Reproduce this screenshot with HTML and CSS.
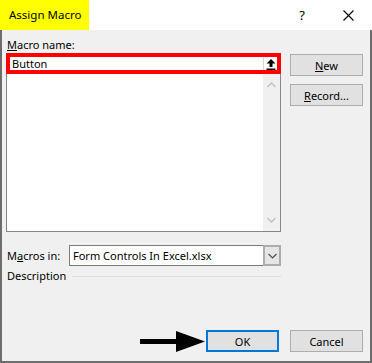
FILE: index.html
```html
<!DOCTYPE html>
<html lang="en">
<head>
  <meta charset="UTF-8" />
  <title>Assign Macro</title>
  <link rel="stylesheet" href="styles.css">
</head>
<body>
  <div class="dialog">
    <div class="titlebar">
      <span class="title">Assign Macro</span>
      <span class="help">?</span>
      <span class="close">
        <svg width="11" height="11" viewBox="0 0 11 11"><path d="M0.5 0.5 L10.5 10.5 M10.5 0.5 L0.5 10.5" stroke="#000" stroke-width="1.1" fill="none"/></svg>
      </span>
    </div>

    <div class="content">
      <div class="main">
        <div class="left">
          <div class="label"><u>M</u>acro name:</div>
          <div class="name-box">
            <span class="name-text">Button</span>
            <span class="collapse-btn">
              <svg width="10" height="12" viewBox="0 0 10 12"><path d="M5 1 L9.5 5.5 L6.5 5.5 L6.5 9 L3.5 9 L3.5 5.5 L0.5 5.5 Z" fill="#000"/><rect x="0.5" y="10.5" width="9" height="1.5" fill="#000"/></svg>
            </span>
          </div>
          <div class="macro-list">
            <div class="list-items"></div>
            <div class="scrollbar">
              <svg width="9" height="6" viewBox="0 0 9 6"><path d="M0.5 5 L4.5 1 L8.5 5" stroke="#c2c2c2" stroke-width="1.5" fill="none"/></svg>
              <svg width="9" height="6" viewBox="0 0 9 6"><path d="M0.5 1 L4.5 5 L8.5 1" stroke="#c2c2c2" stroke-width="1.5" fill="none"/></svg>
            </div>
          </div>
          <div class="macros-in">
            <span class="label">M<u>a</u>cros in:</span>
            <div class="combo">
              <span class="combo-text">Form Controls In Excel.xlsx</span>
              <span class="combo-btn">
                <svg width="9" height="6" viewBox="0 0 9 6"><path d="M0.5 1 L4.5 5 L8.5 1" stroke="#505050" stroke-width="1.2" fill="none"/></svg>
              </span>
            </div>
          </div>
          <div class="description">
            <span>Description</span>
            <span class="rule"></span>
          </div>
        </div>

        <div class="right">
          <button class="btn"><u>N</u>ew</button>
          <button class="btn"><u>R</u>ecord...</button>
        </div>
      </div>

      <div class="footer">
        <svg class="pointer" width="66" height="26" viewBox="0 0 66 26">
          <rect x="0" y="11" width="38" height="5" fill="#000"/>
          <path d="M36 3 L65 13.5 L36 24 Z" fill="#000"/>
        </svg>
        <button class="btn ok">OK</button>
        <button class="btn">Cancel</button>
      </div>
    </div>
  </div>
</body>
</html>
```

FILE: styles.css
```css
body {
  margin: 0; padding: 0;
  font-family: "Noto Sans", "Liberation Sans", sans-serif; font-size: 11px; color: #000;
}
.dialog {
  width: 372px; height: 363px; display: flex; flex-direction: column;
  background: #f0f0f0;
}
.titlebar {
  height: 30px; background: #fff; display: flex; align-items: center;
  font-size: 11.5px;
}
.title {
  background: #ffff00; height: 30px; line-height: 30px; padding-left: 9px;
  width: 89px; box-sizing: border-box; white-space: nowrap;
}
.help { margin-left: auto; margin-right: 38px; font-size: 13px; }
.close { margin-right: 18px; display: flex; }
.content {
  flex: 1; display: flex; flex-direction: column;
  border: 2px solid #6d6d6d; border-top: none;
  padding: 7px 7px 7px 4px;
}
.main { display: flex; gap: 9px; }
.left { width: 275px; display: flex; flex-direction: column; }
.label { line-height: 16px; padding-left: 1px; }
.name-box {
  height: 21px; box-sizing: border-box; border: 4px solid #ff0000; background: #fff;
  display: flex; align-items: center; justify-content: space-between;
}
.name-text { padding-left: 2px; }
.collapse-btn {
  width: 13px; height: 13px; border-left: 1px solid #d6d6d6;
  display: flex; align-items: center; justify-content: center;
}
.macro-list {
  height: 158px; box-sizing: border-box; border: 1px solid #828790; border-top: none;
  background: #fff; display: flex;
}
.list-items { flex: 1; }
.scrollbar {
  width: 17px; background: #f0f0f0; display: flex; flex-direction: column;
  justify-content: space-between; align-items: center; padding: 8px 0 8px 0;
}
.macros-in {
  margin-top: 13px; display: flex; align-items: center; justify-content: space-between;
}
.combo {
  width: 212px; height: 21px; box-sizing: border-box; border: 1px solid #7a7a7a;
  background: #fff; display: flex; align-items: stretch;
}
.combo-text { flex: 1; padding-left: 3px; line-height: 19px; }
.combo-btn {
  width: 14px; border: 2px solid #adadad; background: #e5e5e5;
  margin: -1px -1px -1px 0;
  display: flex; align-items: center; justify-content: center;
}
.description {
  margin-top: 2px; display: flex; align-items: center; gap: 6px; line-height: 16px; padding-left: 1px;
}
.rule { flex: 1; height: 1px; background: #dcdcdc; }
.right { display: flex; flex-direction: column; gap: 8px; padding-top: 17px; }
.btn {
  width: 73px; height: 22px; box-sizing: border-box; padding: 0;
  background: #e1e1e1; border: 1px solid #adadad;
  font-family: inherit; font-size: 11px; color: #000;
}
.footer {
  margin-top: auto; display: flex; align-items: center; justify-content: flex-end; gap: 11px;
}
.pointer { margin-right: -11px; }
.btn.ok { border: 2px solid #0078d7; }
```
